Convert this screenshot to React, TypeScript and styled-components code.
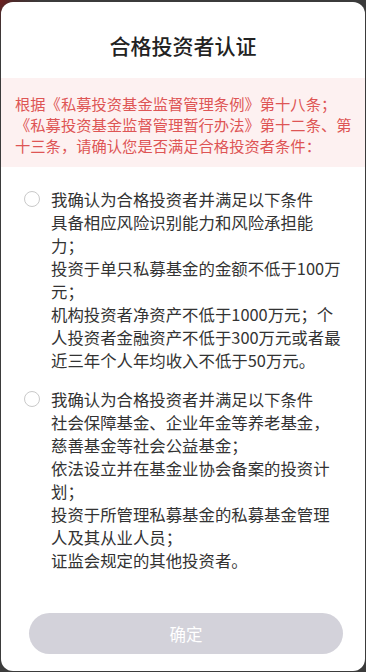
import { useState } from 'react';
import { styled, createGlobalStyle } from 'styled-components';

const GlobalStyle = createGlobalStyle`
  html, body {
    margin: 0;
    padding: 0;
    background: radial-gradient(circle at 0 0, #6e1e1e 0, #4a2a2a 14px, #3b3b3b 40px);
    font-family: "Noto Sans CJK SC", "Noto Sans", "Liberation Sans", sans-serif;
  }
`;

interface Option {
  id: string;
  items: string[];
}

const OPTIONS: Option[] = [
  {
    id: 'a',
    items: [
      '我确认为合格投资者并满足以下条件',
      '具备相应风险识别能力和风险承担能力；',
      '投资于单只私募基金的金额不低于100万元；',
      '机构投资者净资产不低于1000万元；个人投资者金融资产不低于300万元或者最近三年个人年均收入不低于50万元。',
    ],
  },
  {
    id: 'b',
    items: [
      '我确认为合格投资者并满足以下条件',
      '社会保障基金、企业年金等养老基金，慈善基金等社会公益基金；',
      '依法设立并在基金业协会备案的投资计划；',
      '投资于所管理私募基金的私募基金管理人及其从业人员；',
      '证监会规定的其他投资者。',
    ],
  },
];

export default function App() {
  const [selected, setSelected] = useState<string | null>(null);

  return (
    <Backdrop>
      <GlobalStyle />
      <Modal>
        <Title>合格投资者认证</Title>
        <Notice>
          根据《私募投资基金监督管理条例》第十八条；
          <br />
          《私募投资基金监督管理暂行办法》第十二条、第十三条，请确认您是否满足合格投资者条件：
        </Notice>
        <OptionList>
          {OPTIONS.map((opt) => (
            <OptionRow key={opt.id} onClick={() => setSelected(opt.id)}>
              <Radio $checked={selected === opt.id} />
              <OptionText>
                {opt.items.map((line, i) => (
                  <Line key={i}>{line}</Line>
                ))}
              </OptionText>
            </OptionRow>
          ))}
        </OptionList>
        <ConfirmButton disabled={!selected}>确定</ConfirmButton>
      </Modal>
    </Backdrop>
  );
}

const Backdrop = styled.div`
  display: flex;
  padding: 2px 1px 1px 1px;
  height: 672px;
  box-sizing: border-box;
`;

const Modal = styled.div`
  width: 364px;
  height: 669px;
  background: #ffffff;
  border-radius: 12px;
  display: flex;
  flex-direction: column;
  padding-top: 29px;
  box-sizing: border-box;
  overflow: hidden;
`;

const Title = styled.h2`
  margin: 0;
  font-size: 21px;
  line-height: 28px;
  font-weight: 500;
  color: #222222;
  text-align: center;
`;

const Notice = styled.div`
  margin-top: 19px;
  background: #fdf1f1;
  color: #de5555;
  font-size: 15.3px;
  line-height: 20.8px;
  padding: 15px 10px 12px 14px;
`;

const OptionList = styled.div`
  flex: 1;
  display: flex;
  flex-direction: column;
  gap: 16px;
  padding: 21px 0 0 23px;
`;

const OptionRow = styled.div`
  display: flex;
  align-items: flex-start;
  gap: 11px;
  cursor: pointer;
`;

const Radio = styled.span<{ $checked: boolean }>`
  flex: none;
  width: 16px;
  height: 16px;
  margin-top: 3px;
  border-radius: 50%;
  box-sizing: border-box;
  border: 1px solid ${({ $checked }) => ($checked ? '#de5555' : '#c9c9c9')};
  background: ${({ $checked }) => ($checked ? '#de5555' : '#ffffff')};
`;

const OptionText = styled.div`
  width: 292px;
  font-size: 16.4px;
  line-height: 23px;
  color: #333333;
`;

const Line = styled.div``;

const ConfirmButton = styled.button`
  margin: 0 22px 17px 28px;
  height: 41px;
  border: none;
  border-radius: 21px;
  background: #d3d2da;
  color: #ffffff;
  font-family: inherit;
  font-size: 16.5px;
  &:disabled {
    cursor: default;
  }
`;
